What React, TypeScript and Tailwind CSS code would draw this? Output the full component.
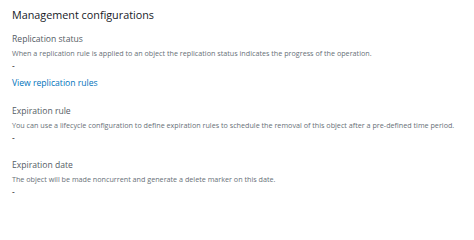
const sections = [
  {
    label: "Replication status",
    desc: "When a replication rule is applied to an object the replication status indicates the progress of the operation.",
    link: "View replication rules",
  },
  {
    label: "Expiration rule",
    desc: "You can use a lifecycle configuration to define expiration rules to schedule the removal of this object after a pre-defined time period.",
  },
  {
    label: "Expiration date",
    desc: "The object will be made noncurrent and generate a delete marker on this date.",
  },
];

const App = () => {
  return (
    <div className="w-[474px] h-[211px] bg-white px-3 pt-[7px] font-['Open_Sans',sans-serif] overflow-hidden">
      <h2 className="text-[10.8px] leading-[16px] text-[#16191f] mb-[9px]">
        Management configurations
      </h2>
      <div className="flex flex-col gap-[14px]">
        {sections.map((s) => (
          <div key={s.label}>
            <div className="text-[8.6px] leading-[14px] text-[#545b64]">{s.label}</div>
            <div className="text-[7.2px] leading-[14px] text-[#687078] whitespace-nowrap">{s.desc}</div>
            <div className="text-[8.6px] leading-[12px] text-[#16191f]">-</div>
            {s.link && (
              <a href="#" className="block mt-[4px] text-[8.6px] leading-[14px] text-[#0073bb]">
                {s.link}
              </a>
            )}
          </div>
        ))}
      </div>
    </div>
  );
};

export default App;
